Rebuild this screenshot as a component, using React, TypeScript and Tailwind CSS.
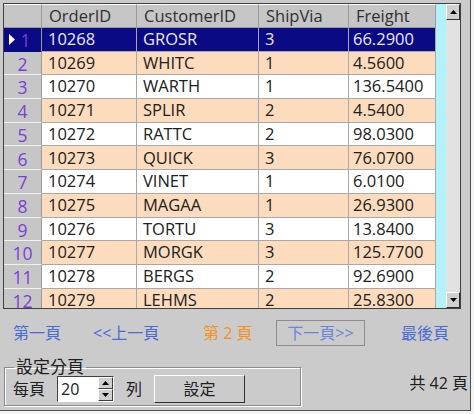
import React from "react";

const rows = [
  ["10268", "GROSR", "3", "66.2900"],
  ["10269", "WHITC", "1", "4.5600"],
  ["10270", "WARTH", "1", "136.5400"],
  ["10271", "SPLIR", "2", "4.5400"],
  ["10272", "RATTC", "2", "98.0300"],
  ["10273", "QUICK", "3", "76.0700"],
  ["10274", "VINET", "1", "6.0100"],
  ["10275", "MAGAA", "1", "26.9300"],
  ["10276", "TORTU", "3", "13.8400"],
  ["10277", "MORGK", "3", "125.7700"],
  ["10278", "BERGS", "2", "92.6900"],
  ["10279", "LEHMS", "2", "25.8300"],
];

const colW = ["w-[95px]", "w-[122px]", "w-[90px]", "w-[87px]"];
const heads = ["OrderID", "CustomerID", "ShipVia", "Freight"];

function Arrow({ up }: { up?: boolean }) {
  return (
    <svg width="7" height="4" viewBox="0 0 7 4">
      {up ? <polygon points="0,4 7,4 3.5,0" fill="#000" /> : <polygon points="0,0 7,0 3.5,4" fill="#000" />}
    </svg>
  );
}

export default function App() {
  return (
    <div className="w-[474px] h-[414px] bg-[#f4f4f4] font-['Open_Sans','Noto_Sans_CJK_TC',sans-serif] text-[16.5px] text-[#202020]">
      <div className="w-[471px] h-[411px] bg-[#cbcbcb] border-r border-b border-[#505050] flex flex-col">
        {/* grid */}
        <div className="ml-[3px] mt-[3px] w-[458px] h-[306px] border border-[#404040] flex overflow-hidden">
          <div className="w-[432px] flex flex-col">
            <div className="flex h-[24px] shrink-0 bg-[#c6c6c6] border-b border-[#9a9a9a]">
              <div className="w-[38px] border-r border-[#9a9a9a] border-t border-t-white" />
              {heads.map((h, i) => (
                <div key={h} className={`${colW[i]} border-r border-[#9a9a9a] border-t border-t-white pl-[7px] flex items-center leading-none text-[#303030]`}>
                  {h}
                </div>
              ))}
            </div>
            {rows.map((r, idx) => {
              const n = idx + 1;
              const sel = n === 1;
              const bg = sel ? "bg-[#0a0a84] text-[#e8e8ff]" : n % 2 === 0 ? "bg-[#fddcbd]" : "bg-white";
              return (
                <div key={n} className="flex h-[23.7px] shrink-0">
                  <div
                    className={`w-[38px] relative flex items-center justify-center leading-none text-[17.5px] text-[#7a3fd4] border-r border-b border-r-[#9a9a9a] ${
                      sel ? "bg-[#0a0a84] border-b-[#0a0a84]" : "bg-[#c6c6c6] border-b-[#f0f0f0]"
                    }`}
                  >
                    {sel && (
                      <svg className="absolute left-[5px] top-[6px]" width="6" height="11" viewBox="0 0 6 11">
                        <polygon points="0,0 6,5.5 0,11" fill="#fff" />
                      </svg>
                    )}
                    <span className={`pt-[3px] ${sel ? "pl-[6px]" : ""}`}>{n}</span>
                  </div>
                  {r.map((c, i) => (
                    <div
                      key={i}
                      className={`${colW[i]} ${bg} border-r border-b border-[#a8a8a8] ${i === 3 ? "pl-[4px]" : "pl-[6px]"} flex items-center leading-none`}
                    >
                      {c}
                    </div>
                  ))}
                </div>
              );
            })}
          </div>
          <div className="w-[10px] bg-[#b4f2fa]" />
          <div className="w-[14px] flex flex-col bg-[#e2e2e2]">
            <div className="h-[16px] bg-[#d0d0d0] border border-t-white border-l-white border-r-[#303030] border-b-[#303030] flex items-center justify-center">
              <Arrow up />
            </div>
            <div className="flex-1" />
            <div className="h-[16px] bg-[#d0d0d0] border border-t-white border-l-white border-r-[#303030] border-b-[#303030] flex items-center justify-center">
              <Arrow />
            </div>
          </div>
        </div>

        {/* pager */}
        <div className="mt-[11px] h-[26px] flex items-center whitespace-nowrap leading-none text-[16px]">
          <div className="ml-[13px] w-[47px] text-[#4a6ad6]">第一頁</div>
          <div className="ml-[33px] w-[67px] text-[#4a6ad6]">&lt;&lt;上一頁</div>
          <div className="ml-[43px] w-[47px] text-[#f5921e]">第 2 頁</div>
          <div className="ml-[26px] w-[89px] h-[26px] border border-[#8c8c8c] flex items-center justify-center text-[#6a86dc]">
            下一頁&gt;&gt;
          </div>
          <div className="ml-[36px] w-[47px] text-[#4a6ad6]">最後頁</div>
        </div>

        {/* settings */}
        <div className="mt-[12px] flex items-start text-[16px]">
          <fieldset className="ml-[4px] w-[298px] h-[49px] border border-[#8a8a8a] border-r-white border-b-white shadow-[inset_-1px_-1px_0_#8a8a8a,inset_1px_1px_0_#ffffff] px-[8px]">
            <legend className="ml-[1px] px-[2px] leading-[18px] text-[17px]">設定分頁</legend>
            <div className="flex items-center -mt-[1px]">
              <span className="leading-none">每頁</span>
              <div className="ml-[12px] w-[57px] h-[26px] bg-white border border-t-[#404040] border-l-[#404040] border-r-white border-b-white flex">
                <div className="flex-1 pl-[3px] flex items-center leading-none">20</div>
                <div className="w-[15px] flex flex-col">
                  <div className="flex-1 bg-[#d0d0d0] border border-t-white border-l-white border-r-[#404040] border-b-[#404040] flex items-center justify-center">
                    <Arrow up />
                  </div>
                  <div className="flex-1 bg-[#d0d0d0] border border-t-white border-l-white border-r-[#404040] border-b-[#404040] flex items-center justify-center">
                    <Arrow />
                  </div>
                </div>
              </div>
              <span className="ml-[12px] leading-none">列</span>
              <button className="ml-[12px] w-[91px] h-[28px] bg-[#cbcbcb] border border-t-white border-l-white border-r-[#303030] border-b-[#303030] leading-none text-[16px]">
                設定
              </button>
            </div>
          </fieldset>
          <div className="flex-1 flex justify-end pr-[2px] pt-[17px] leading-none">共 42 頁</div>
        </div>
      </div>
    </div>
  );
}
